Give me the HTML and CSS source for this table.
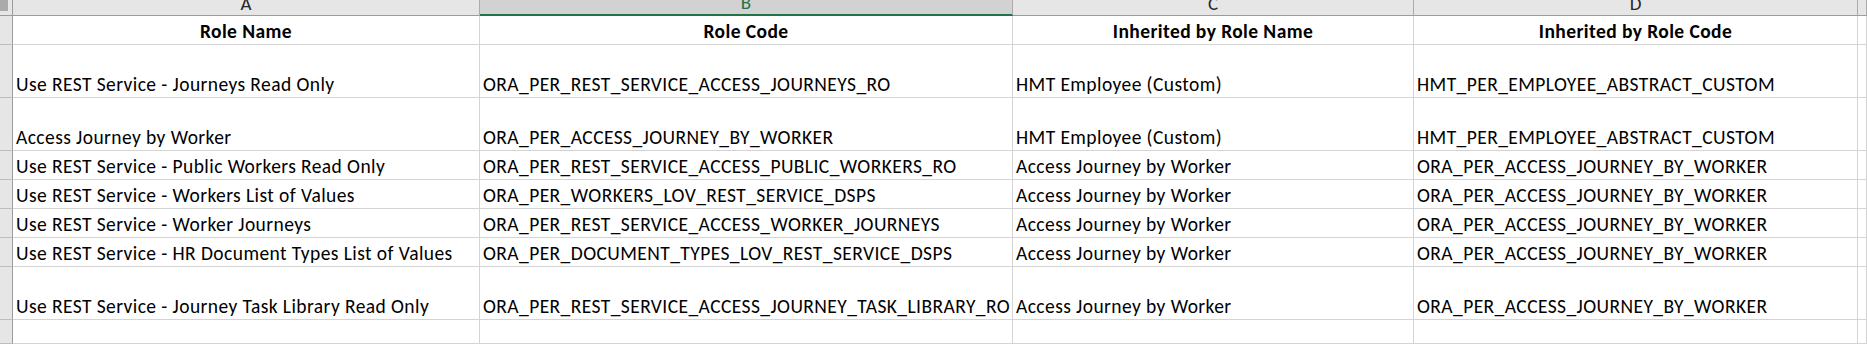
FILE: index.html
```html
<!DOCTYPE html>
<html lang="en">
<head>
<meta charset="utf-8">
<title>Roles</title>
<link rel="stylesheet" href="styles.css">
</head>
<body>
<div class="sheet">
  <div class="corner"><span class="corner-mark"></span></div>
  <div class="colhead">A</div>
  <div class="colhead sel">B</div>
  <div class="colhead">C</div>
  <div class="colhead">D</div>
  <div class="colhead"></div>

  <div class="rowhead"></div>
  <div class="cell hdr">Role Name</div>
  <div class="cell hdr">Role Code</div>
  <div class="cell hdr">Inherited by Role Name</div>
  <div class="cell hdr">Inherited by Role Code</div>
  <div class="cell"></div>

  <div class="rowhead"></div>
  <div class="cell">Use REST Service - Journeys Read Only</div>
  <div class="cell">ORA_PER_REST_SERVICE_ACCESS_JOURNEYS_RO</div>
  <div class="cell">HMT Employee (Custom)</div>
  <div class="cell">HMT_PER_EMPLOYEE_ABSTRACT_CUSTOM</div>
  <div class="cell"></div>

  <div class="rowhead"></div>
  <div class="cell">Access Journey by Worker</div>
  <div class="cell">ORA_PER_ACCESS_JOURNEY_BY_WORKER</div>
  <div class="cell">HMT Employee (Custom)</div>
  <div class="cell">HMT_PER_EMPLOYEE_ABSTRACT_CUSTOM</div>
  <div class="cell"></div>

  <div class="rowhead"></div>
  <div class="cell">Use REST Service - Public Workers Read Only</div>
  <div class="cell">ORA_PER_REST_SERVICE_ACCESS_PUBLIC_WORKERS_RO</div>
  <div class="cell">Access Journey by Worker</div>
  <div class="cell">ORA_PER_ACCESS_JOURNEY_BY_WORKER</div>
  <div class="cell"></div>

  <div class="rowhead"></div>
  <div class="cell">Use REST Service - Workers List of Values</div>
  <div class="cell">ORA_PER_WORKERS_LOV_REST_SERVICE_DSPS</div>
  <div class="cell">Access Journey by Worker</div>
  <div class="cell">ORA_PER_ACCESS_JOURNEY_BY_WORKER</div>
  <div class="cell"></div>

  <div class="rowhead"></div>
  <div class="cell">Use REST Service - Worker Journeys</div>
  <div class="cell">ORA_PER_REST_SERVICE_ACCESS_WORKER_JOURNEYS</div>
  <div class="cell">Access Journey by Worker</div>
  <div class="cell">ORA_PER_ACCESS_JOURNEY_BY_WORKER</div>
  <div class="cell"></div>

  <div class="rowhead"></div>
  <div class="cell">Use REST Service - HR Document Types List of Values</div>
  <div class="cell">ORA_PER_DOCUMENT_TYPES_LOV_REST_SERVICE_DSPS</div>
  <div class="cell">Access Journey by Worker</div>
  <div class="cell">ORA_PER_ACCESS_JOURNEY_BY_WORKER</div>
  <div class="cell"></div>

  <div class="rowhead"></div>
  <div class="cell">Use REST Service - Journey Task Library Read Only</div>
  <div class="cell">ORA_PER_REST_SERVICE_ACCESS_JOURNEY_TASK_LIBRARY_RO</div>
  <div class="cell">Access Journey by Worker</div>
  <div class="cell">ORA_PER_ACCESS_JOURNEY_BY_WORKER</div>
  <div class="cell"></div>

  <div class="rowhead"></div>
  <div class="cell"></div>
  <div class="cell"></div>
  <div class="cell"></div>
  <div class="cell"></div>
  <div class="cell"></div>
</div>
</body>
</html>
```
FILE: styles.css
```css
* {
  box-sizing: border-box;
}

html, body {
  margin: 0;
  padding: 0;
  background: #ffffff;
  overflow: hidden;
}

.sheet {
  display: grid;
  grid-template-columns: 13px 467px 533px 401px 444px 1fr;
  grid-template-rows: 16px 29px 53px 53px 29px 29px 29px 29px 53px 1fr;
  width: 1867px;
  height: 344px;
  font-family: Calibri, Carlito, Lato, "Liberation Sans", sans-serif;
  font-size: 19.5px;
  letter-spacing: 0.42px;
  color: #000000;
}

.corner {
  background: #e6e6e6;
  border-right: 1px solid #9b9b9b;
  border-bottom: 1px solid #9b9b9b;
  display: flex;
  align-items: flex-start;
}

.corner-mark {
  display: block;
  width: 8px;
  height: 11px;
  background: #aaaaaa;
}

.colhead {
  background: #e6e6e6;
  border-right: 1px solid #ababab;
  border-bottom: 1px solid #9b9b9b;
  color: #262626;
  font-size: 19px;
  letter-spacing: 0;
  line-height: 22px;
  display: flex;
  align-items: flex-end;
  justify-content: center;
  overflow: hidden;
}

.colhead.sel {
  background: #d2d2d2;
  color: #217346;
  border-bottom: 2px solid #217346;
  padding-bottom: 0;
}

.colhead:last-child {
  border-right: none;
}

.rowhead {
  background: #e6e6e6;
  border-right: 1px solid #9b9b9b;
  border-bottom: 1px solid #bdbdbd;
}

.cell {
  background: #ffffff;
  border-right: 1px solid #d4d4d4;
  border-bottom: 1px solid #d4d4d4;
  display: flex;
  align-items: flex-end;
  padding: 0 0 2px 3px;
  line-height: 22px;
  white-space: nowrap;
  overflow: visible;
}

.cell.hdr {
  font-weight: 700;
  justify-content: center;
  padding-left: 0;
}
```
